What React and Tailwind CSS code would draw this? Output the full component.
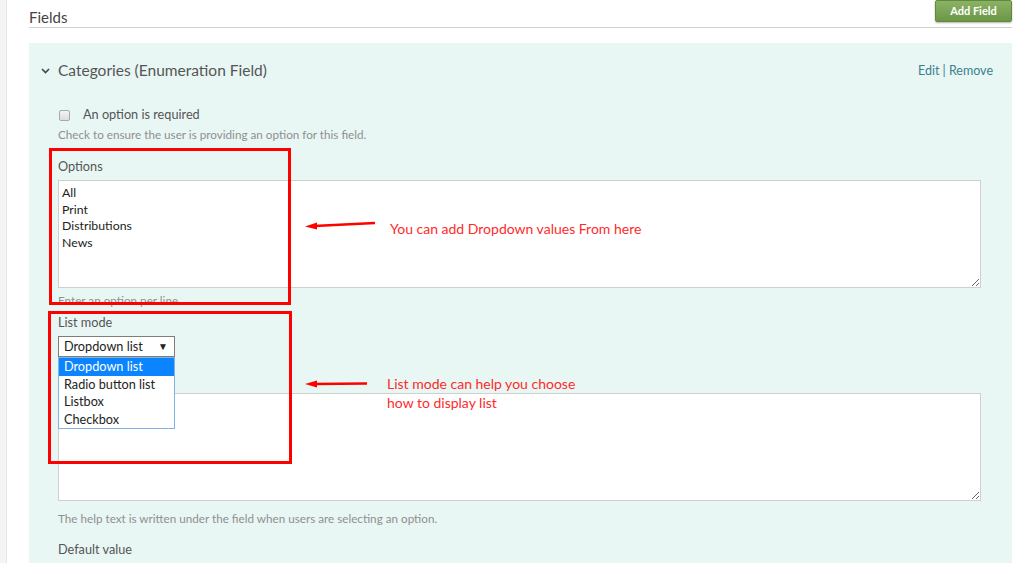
import { useState } from "react";

const listModes = ["Dropdown list", "Radio button list", "Listbox", "Checkbox"];

const Annotations = () => (
    <>
        {/* red highlight boxes */}
        <div className="absolute left-[49px] top-[148px] w-[242px] h-[157px] border-[3px] border-[#ff0000]"></div>
        <div className="absolute left-[48px] top-[311px] w-[244px] h-[153px] border-[3px] border-[#ff0000]"></div>

        {/* arrows */}
        <svg className="absolute left-[300px] top-[215px]" width="80" height="20" viewBox="0 0 80 20">
            <path d="M75 8 L14 11" stroke="#ff0000" strokeWidth="2.5" fill="none" />
            <path d="M5 11.5 L17 7.5 L17 14.5 Z" fill="#ff0000" />
        </svg>
        <svg className="absolute left-[300px] top-[374px]" width="75" height="20" viewBox="0 0 75 20">
            <path d="M67 9.5 L14 10" stroke="#ff0000" strokeWidth="2.5" fill="none" />
            <path d="M5 10 L17 6.5 L17 13.5 Z" fill="#ff0000" />
        </svg>

        <div className="absolute left-[390px] top-[220px] text-[14px] leading-[18px] text-[#ff2a2a]">
            You can add Dropdown values From here
        </div>
        <div className="absolute left-[387px] top-[374px] text-[14px] leading-[19px] text-[#ff2a2a]">
            <p>List mode can help you choose</p>
            <p>how to display list</p>
        </div>
    </>
);

const App = () => {
    const [required, setRequired] = useState(false);

    return (
        <div className="relative w-[1024px] h-[563px] overflow-hidden bg-white flex text-[#555] font-['Lato','Liberation_Sans',sans-serif]">
            <div className="w-[7px] shrink-0 bg-[#f4f4f4] border-r border-[#e6e6e6]"></div>

            <div className="flex-1 pl-[22px] pr-[12px]">
                {/* header */}
                <div className="flex justify-between items-start h-[28px] border-b border-[#cfcfcf]">
                    <h1 className="text-[15px] leading-[20px] pt-[7px] text-[#444]">Fields</h1>
                    <button className="w-[77px] h-[22px] rounded-[2px] border border-[#5f8a3e] bg-gradient-to-b from-[#8bb264] to-[#6c9747] text-white text-[11px] font-bold shadow-[0_1px_2px_rgba(0,0,0,0.3)]">
                        Add Field
                    </button>
                </div>

                {/* field panel */}
                <div className="mt-[15px] bg-[#e8f7f4] pt-[18px] h-[600px]">
                    <div className="flex justify-between items-center h-[20px] pl-[12px] pr-[19px]">
                        <div className="flex items-center">
                            <svg width="9" height="6" viewBox="0 0 9 6" className="mr-[8px]">
                                <path d="M1 1 L4.5 4.5 L8 1" stroke="#444" strokeWidth="1.6" fill="none" />
                            </svg>
                            <h2 className="text-[15.5px] text-[#555]">Categories (Enumeration Field)</h2>
                        </div>
                        <div className="text-[12.5px] text-[#3b7f8e]">
                            <a>Edit</a> | <a>Remove</a>
                        </div>
                    </div>

                    <div className="pl-[29px] pr-[31px]">
                        <label className="mt-[24px] flex items-center h-[20px] text-[12.7px]">
                            <span
                                onClick={() => setRequired(!required)}
                                className="ml-[1px] w-[11px] h-[11px] rounded-[2px] border border-[#a9a9a9] bg-gradient-to-b from-[#f4f4f4] to-[#dcdcdc]"
                            ></span>
                            <span className="ml-[13px]">An option is required</span>
                        </label>
                        <p className="mt-[2px] text-[11.7px] leading-[14px] text-[#8f8f8f]">Check to ensure the user is providing an option for this field.</p>

                        <p className="mt-[17px] text-[12.7px] leading-[17px]">Options</p>
                        <textarea
                            readOnly
                            className="mt-[5px] block w-full h-[108px] bg-white border border-[#cfcfcf] px-[3px] pt-[4px] text-[12.3px] leading-[16.5px] text-[#222] outline-none"
                            value={"All\nPrint\nDistributions\nNews"}
                        ></textarea>
                        <p className="mt-[5px] text-[11.7px] leading-[14px] text-[#8f8f8f]">Enter an option per line.</p>

                        <p className="mt-[7px] text-[12.7px] leading-[17px]">List mode</p>
                        <div className="relative mt-[5px] w-[117px]">
                            <div className="h-[21px] border border-[#7d7f74] bg-white flex items-center justify-between pl-[5px] pr-[6px] text-[12.7px] text-[#222]">
                                <span>Dropdown list</span>
                                <span className="text-[10px]">▼</span>
                            </div>
                            {/* open dropdown */}
                            <ul className="absolute z-10 left-0 top-[21px] w-[117px] bg-white border border-[#80b4e6] text-[12.7px] text-[#222]">
                                {listModes.map((mode, index) => (
                                    <li
                                        key={mode}
                                        className={index === 0 ? "h-[17.5px] leading-[17.5px] px-[5px] bg-[#0a84ff] text-white" : "h-[17.5px] leading-[17.5px] px-[5px]"}
                                    >
                                        {mode}
                                    </li>
                                ))}
                            </ul>
                        </div>

                        {/* help text label sits under the open dropdown */}
                        <div className="h-[36px]"></div>
                        <textarea
                            readOnly
                            className="block w-full h-[108px] bg-white border border-[#cfcfcf] outline-none"
                        ></textarea>
                        <p className="mt-[10px] text-[11.7px] leading-[14px] text-[#8f8f8f]">The help text is written under the field when users are selecting an option.</p>

                        <p className="mt-[16px] text-[12.7px] leading-[17px]">Default value</p>
                        <div className="mt-[5px] h-[24px] bg-white border border-[#cfcfcf]"></div>
                    </div>
                </div>
            </div>

            <Annotations />
        </div>
    );
};

export default App;
